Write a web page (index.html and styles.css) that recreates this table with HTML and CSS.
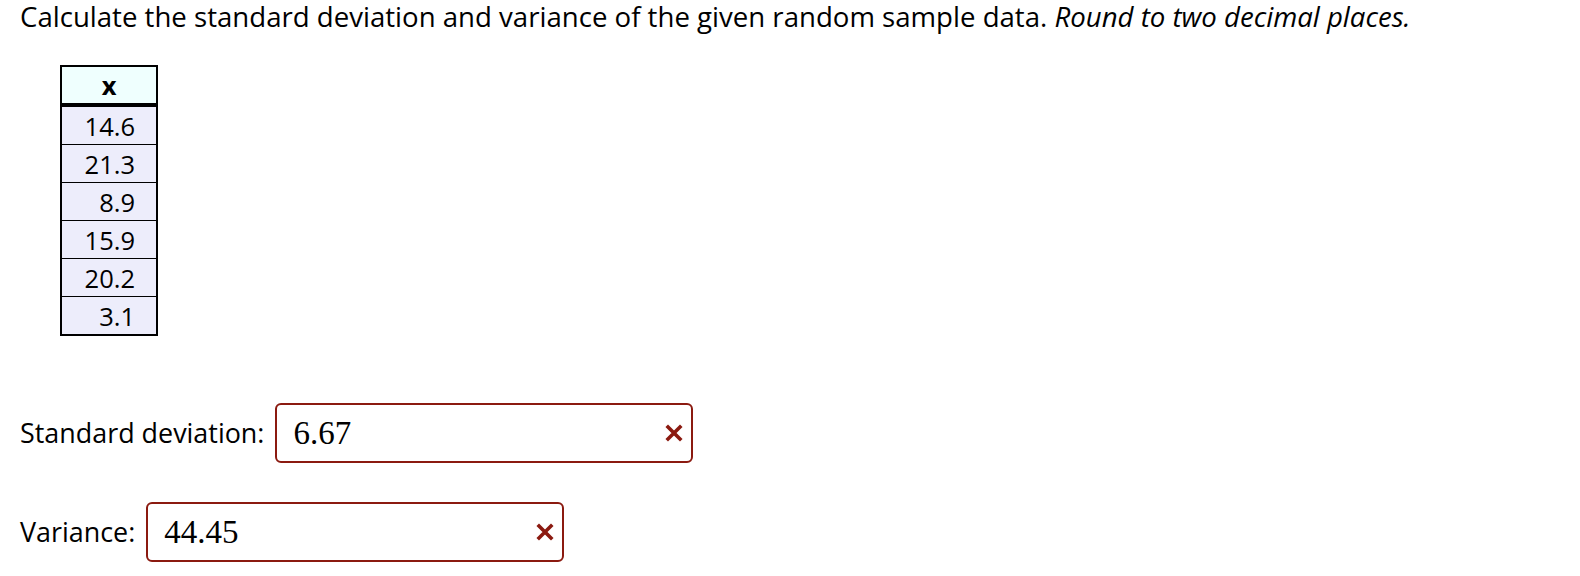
FILE: index.html
```html
<!DOCTYPE html>
<html>
<head>
<meta charset="utf-8">
<link rel="stylesheet" href="styles.css">
</head>
<body>
<div class="page">
  <p class="prompt">Calculate the standard deviation and variance of the given random sample data. <i>Round to two decimal places.</i></p>
  <table class="data">
    <thead>
      <tr><th>x</th></tr>
    </thead>
    <tbody>
      <tr><td>14.6</td></tr>
      <tr><td>21.3</td></tr>
      <tr><td>8.9</td></tr>
      <tr><td>15.9</td></tr>
      <tr><td>20.2</td></tr>
      <tr><td>3.1</td></tr>
    </tbody>
  </table>
  <div class="answer answer-sd">
    <span class="label">Standard deviation:</span>
    <div class="box">
      <span class="value">6.67</span>
      <svg class="wrong" width="18" height="18" viewBox="0 0 18 18"><path d="M3 3L15 15M15 3L3 15" stroke="#8b1a10" stroke-width="3.6" stroke-linecap="square" fill="none"/></svg>
    </div>
  </div>
  <div class="answer answer-var">
    <span class="label">Variance:</span>
    <div class="box">
      <span class="value">44.45</span>
      <svg class="wrong" width="18" height="18" viewBox="0 0 18 18"><path d="M3 3L15 15M15 3L3 15" stroke="#8b1a10" stroke-width="3.6" stroke-linecap="square" fill="none"/></svg>
    </div>
  </div>
</div>
</body>
</html>
```
FILE: styles.css
```css
html, body {
  margin: 0;
  padding: 0;
  background: #fff;
}
.page {
  padding: 0 20px;
  font-family: "Open Sans", "Noto Sans", sans-serif;
  color: #000;
}
.prompt {
  margin: 0;
  font-size: 27.6px;
  line-height: 32px;
  white-space: nowrap;
}
.data {
  margin: 33px 0 0 40px;
  border-collapse: collapse;
  width: 98px;
  border: 2px solid #000;
  font-size: 25.5px;
}
.data th {
  height: 36px;
  padding: 0;
  background: #effffe;
  border-bottom: 4px solid #000;
  font-weight: 700;
  text-align: center;
  line-height: 30px;
}
.data td {
  height: 37px;
  padding: 0 21px 0 0;
  background: #ededfb;
  border-top: 1px solid #000;
  text-align: right;
  line-height: 30px;
}
.data tbody tr:first-child td {
  border-top: 0;
}
.answer {
  display: flex;
  align-items: center;
  gap: 11px;
}
.answer-sd {
  margin-top: 67px;
}
.answer-var {
  margin-top: 39px;
}
.label {
  font-size: 26.9px;
  line-height: 32px;
}
.box {
  box-sizing: border-box;
  width: 418px;
  height: 60px;
  border: 2px solid #8b1a10;
  border-radius: 6px;
  display: flex;
  align-items: center;
  justify-content: space-between;
  padding: 0 8px 0 16px;
}
.value {
  font-family: "Liberation Serif", serif;
  font-size: 33px;
  line-height: 40px;
}
.wrong {
  display: block;
}
```
